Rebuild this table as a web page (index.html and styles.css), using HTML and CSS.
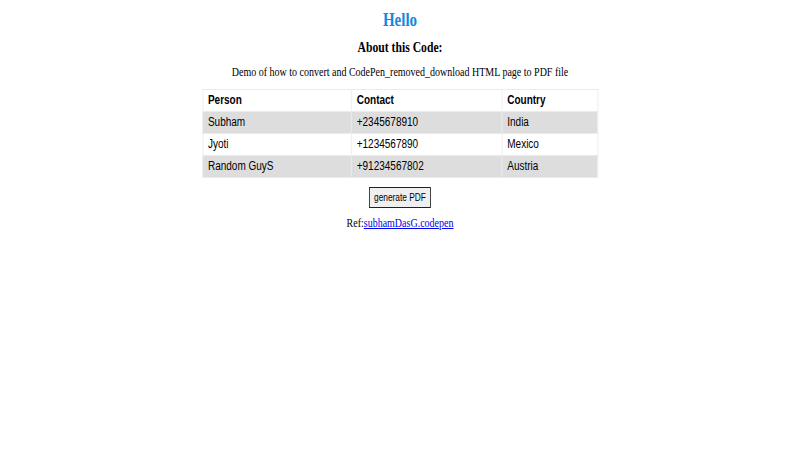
FILE: index.html
```html
<!DOCTYPE html>
<html>
<head>
<meta charset="utf-8">
<link rel="stylesheet" href="styles.css">
</head>
<body>
<div class="viewport">
  <div class="page">
    <div class="content">
      <h3 class="title">Hello</h3>
      <h4 class="subtitle">About this Code:</h4>
      <p class="desc">Demo of how to convert and CodePen_removed_download HTML page to PDF file</p>
      <table class="customers">
        <colgroup><col class="c1"><col class="c2"><col class="c3"></colgroup>
        <thead>
          <tr><th>Person</th><th>Contact</th><th>Country</th></tr>
        </thead>
        <tbody>
          <tr class="odd"><td>Subham</td><td>+2345678910</td><td>India</td></tr>
          <tr><td>Jyoti</td><td>+1234567890</td><td>Mexico</td></tr>
          <tr class="odd"><td>Random GuyS</td><td>+91234567802</td><td>Austria</td></tr>
        </tbody>
      </table>
      <button class="gen">generate PDF</button>
      <p class="ref">Ref:<a href="#">subhamDasG.codepen</a></p>
    </div>
  </div>
</div>
</body>
</html>
```
FILE: styles.css
```css
html, body { margin: 0; padding: 0; background: #fff; }
body { font-family: "Liberation Serif", "Times New Roman", serif; color: #000; }
.viewport { width: 800px; height: 450px; overflow: hidden; }
.page { width: 960px; margin-right: -160px; transform: scaleX(0.833333); transform-origin: 0 0; }
.content { display: flex; flex-direction: column; align-items: center; padding-top: 10px; }
.title { margin: 0; font-size: 18px; font-weight: bold; color: rgb(17, 137, 224); line-height: 21px; }
.subtitle { margin: 9px 0 0; font-size: 14px; font-weight: bold; line-height: 16px; }
.desc { margin: 9px 0 0; font-size: 12px; line-height: 14px; }
.customers { margin-top: 10px; border-collapse: collapse; width: 475px; font-family: "Liberation Sans", Arial, sans-serif; font-size: 12px; }
.c1 { width: 179px; }
.c2 { width: 181px; }
.c3 { width: 115px; }
.customers th, .customers td { border: 1px solid #ebebeb; padding: 4px 6px; text-align: left; line-height: 13px; height: 13px; }
.customers th { font-weight: bold; }
.customers tr.odd td { background: #ddd; }
.gen { margin-top: 9px; font-family: "Liberation Sans", Arial, sans-serif; font-size: 10px; line-height: 13px; padding: 3px 5px; border: 1px solid #222; background: #efefef; color: #000; }
.ref { margin: 8px 0 0; font-size: 12px; line-height: 14px; }
.ref a { color: #0000ee; }
```
